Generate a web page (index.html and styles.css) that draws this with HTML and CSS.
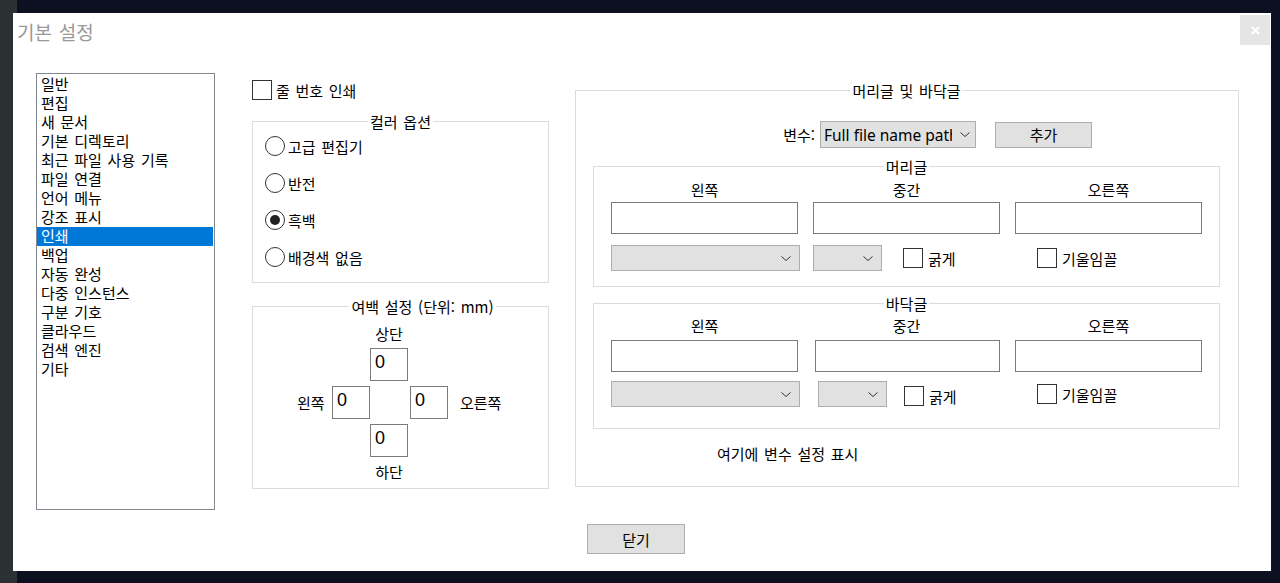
FILE: index.html
```html
<!DOCTYPE html>
<html lang="ko">
<head>
<meta charset="utf-8">
<title>기본 설정</title>
<link rel="stylesheet" href="styles.css">
</head>
<body>
<div class="dialog">
  <div class="titlebar">
    <div class="title">기본 설정</div>
    <div class="close-btn"><svg width="9" height="9" viewBox="0 0 9 9"><path d="M1 1L8 8M8 1L1 8" stroke="#ffffff" stroke-width="2"/></svg></div>
  </div>
  <div class="content">
    <ul class="listbox">
      <li>일반</li>
      <li>편집</li>
      <li>새 문서</li>
      <li>기본 디렉토리</li>
      <li>최근 파일 사용 기록</li>
      <li>파일 연결</li>
      <li>언어 메뉴</li>
      <li>강조 표시</li>
      <li class="selected">인쇄</li>
      <li>백업</li>
      <li>자동 완성</li>
      <li>다중 인스턴스</li>
      <li>구분 기호</li>
      <li>클라우드</li>
      <li>검색 엔진</li>
      <li>기타</li>
    </ul>
    <div class="center-col">
      <div class="check-row"><span class="checkbox"></span><span>줄 번호 인쇄</span></div>
      <fieldset class="group color-group">
        <legend>컬러 옵션</legend>
        <div class="radio-row"><span class="radio"></span><span>고급 편집기</span></div>
        <div class="radio-row"><span class="radio"></span><span>반전</span></div>
        <div class="radio-row"><span class="radio"><span class="dot"></span></span><span>흑백</span></div>
        <div class="radio-row"><span class="radio"></span><span>배경색 없음</span></div>
      </fieldset>
      <fieldset class="group margin-group">
        <legend>여백 설정 (단위: mm)</legend>
        <div class="margin-grid">
          <span class="m-label top-label">상단</span>
          <span class="num-box top-box">0</span>
          <span class="m-label left-label">왼쪽</span>
          <span class="num-box left-box">0</span>
          <span class="num-box right-box">0</span>
          <span class="m-label right-label">오른쪽</span>
          <span class="num-box bottom-box">0</span>
          <span class="m-label bottom-label">하단</span>
        </div>
      </fieldset>
    </div>
    <fieldset class="group hf-group">
      <legend>머리글 및 바닥글</legend>
      <div class="var-row">
        <span class="var-label">변수:</span>
        <div class="combo var-combo"><span class="combo-text">Full file name path</span><svg class="chev" width="10" height="5" viewBox="0 0 10 5"><polyline points="0.5,0.5 5,4.5 9.5,0.5" fill="none" stroke="#333" stroke-width="1"/></svg></div>
        <div class="button add-btn">추가</div>
      </div>
      <fieldset class="group sub-group header-group">
        <legend>머리글</legend>
        <div class="hf-row label-row"><span>왼쪽</span><span>중간</span><span>오른쪽</span></div>
        <div class="hf-row input-row"><span class="textbox"></span><span class="textbox"></span><span class="textbox"></span></div>
        <div class="hf-row combo-row">
          <div class="combo wide-combo"><svg class="chev" width="10" height="5" viewBox="0 0 10 5"><polyline points="0.5,0.5 5,4.5 9.5,0.5" fill="none" stroke="#333" stroke-width="1"/></svg></div>
          <div class="cell"><div class="combo small-combo"><svg class="chev" width="10" height="5" viewBox="0 0 10 5"><polyline points="0.5,0.5 5,4.5 9.5,0.5" fill="none" stroke="#333" stroke-width="1"/></svg></div><span class="check bold-check"><span class="checkbox"></span>굵게</span></div>
          <div class="cell"><span class="check italic-check"><span class="checkbox"></span>기울임꼴</span></div>
        </div>
      </fieldset>
      <fieldset class="group sub-group footer-group">
        <legend>바닥글</legend>
        <div class="hf-row label-row"><span>왼쪽</span><span>중간</span><span>오른쪽</span></div>
        <div class="hf-row input-row"><span class="textbox"></span><span class="textbox shifted"></span><span class="textbox"></span></div>
        <div class="hf-row combo-row">
          <div class="combo wide-combo"><svg class="chev" width="10" height="5" viewBox="0 0 10 5"><polyline points="0.5,0.5 5,4.5 9.5,0.5" fill="none" stroke="#333" stroke-width="1"/></svg></div>
          <div class="cell"><div class="combo small-combo shifted-combo"><svg class="chev" width="10" height="5" viewBox="0 0 10 5"><polyline points="0.5,0.5 5,4.5 9.5,0.5" fill="none" stroke="#333" stroke-width="1"/></svg></div><span class="check bold-check near"><span class="checkbox"></span>굵게</span></div>
          <div class="cell"><span class="check italic-check"><span class="checkbox"></span>기울임꼴</span></div>
        </div>
      </fieldset>
      <div class="var-display">여기에 변수 설정 표시</div>
    </fieldset>
  </div>
  <div class="footer"><div class="button close-button">닫기</div></div>
</div>
</body>
</html>
```

FILE: styles.css
```css
* { box-sizing: border-box; }
html, body { margin: 0; padding: 0; }
body {
  width: 1280px;
  height: 583px;
  overflow: hidden;
  background: linear-gradient(to right, #2b3033 0, #2b3033 17px, #0c1020 17px);
  font-family: "Noto Sans CJK KR", "Noto Sans", sans-serif;
  font-size: 15px;
  word-spacing: 1.5px;
  color: #000;
}
.dialog {
  margin: 13px 0 0 13px;
  width: 1258px;
  height: 558px;
  background: #fff;
  display: flex;
  flex-direction: column;
}
.titlebar {
  height: 60px;
  display: flex;
  justify-content: space-between;
  align-items: flex-start;
  flex: none;
}
.title {
  margin: 8px 0 0 4px;
  font-size: 19px;
  line-height: 22px;
  color: #999;
}
.close-btn {
  width: 30px;
  height: 30px;
  margin: 2px 1px 0 0;
  background: #e5e5e5;
  display: flex;
  align-items: center;
  justify-content: center;
}
.content {
  display: flex;
  align-items: flex-start;
  padding-left: 23px;
  height: 437px;
  flex: none;
}
.listbox {
  list-style: none;
  margin: 0;
  padding: 1px 1px 0 0;
  width: 179px;
  height: 437px;
  border: 1px solid #828790;
  flex: none;
}
.listbox li {
  height: 19px;
  line-height: 18px;
  padding-left: 4px;
  white-space: nowrap;
}
.listbox li.selected { background: #0078d7; color: #fff; }

.center-col {
  margin-left: 37px;
  width: 297px;
  display: flex;
  flex-direction: column;
  flex: none;
}
.check-row {
  display: flex;
  align-items: center;
  gap: 4px;
  margin-top: 7px;
  height: 20px;
}
.checkbox {
  width: 20px;
  height: 20px;
  border: 1px solid #333;
  background: #fff;
  flex: none;
  display: inline-block;
}
fieldset.group {
  margin: 0;
  padding: 0;
  border: 1px solid #dcdcdc;
  min-width: 0;
}
fieldset.group > legend {
  margin: 0 auto;
  padding: 0 2px;
  line-height: 17px;
}
.color-group {
  margin-top: 13px !important;
  padding: 6px 12px 15px !important;
}
.radio-row {
  display: flex;
  align-items: center;
  gap: 3px;
  height: 20px;
}
.radio-row + .radio-row { margin-top: 17px; }
.radio {
  width: 20px;
  height: 20px;
  border: 1px solid #333;
  border-radius: 50%;
  display: flex;
  align-items: center;
  justify-content: center;
  flex: none;
}
.dot {
  width: 10px;
  height: 10px;
  border-radius: 50%;
  background: #222;
}
.margin-group {
  margin-top: 15px !important;
  padding: 9px 0 7px 44px !important;
}
.margin-grid {
  display: grid;
  grid-template-columns: 35px 38px 40px 38px 54px;
  grid-template-rows: 19px 33px 33px 33px 19px;
  row-gap: 5px;
}
.m-label { line-height: 19px; white-space: nowrap; }
.top-label { grid-column: 3; grid-row: 1; text-align: center; padding-right: 2px; }
.left-label { grid-column: 1; grid-row: 3; align-self: center; }
.right-label { grid-column: 5; grid-row: 3; align-self: center; padding-left: 12px; }
.bottom-label { grid-column: 3; grid-row: 5; text-align: center; padding-right: 2px; }
.num-box {
  width: 38px;
  height: 33px;
  border: 1px solid #7a7a7a;
  font-family: "Liberation Sans", Arial, sans-serif;
  font-size: 18px;
  line-height: 20px;
  padding: 3px 0 0 4px;
}
.top-box { grid-column: 3; grid-row: 2; }
.left-box { grid-column: 2; grid-row: 3; }
.right-box { grid-column: 4; grid-row: 3; }
.bottom-box { grid-column: 3; grid-row: 4; }

.hf-group {
  margin-left: 26px !important;
  margin-top: 9px !important;
  width: 664px;
  padding: 22px 18px 23px 17px !important;
  flex: none;
}
.var-row {
  display: flex;
  align-items: center;
  height: 27px;
}
.var-label {
  width: 40px;
  margin-left: 182px;
  text-align: right;
}
.combo {
  background: #e1e1e1;
  border: 1px solid #adadad;
  display: flex;
  align-items: center;
  justify-content: flex-end;
  padding-right: 8px;
  flex: none;
}
.var-combo {
  width: 156px;
  height: 27px;
  margin-left: 5px;
  justify-content: space-between;
  padding: 0 5px 0 3px;
}
.combo-text {
  font-family: "Noto Sans", "Open Sans", sans-serif;
  font-size: 15.5px;
  word-spacing: 0;
  line-height: 20px;
  width: 128px;
  overflow: hidden;
  white-space: nowrap;
}
.button {
  background: #e1e1e1;
  border: 1px solid #adadad;
  display: flex;
  align-items: center;
  justify-content: center;
  flex: none;
}
.add-btn {
  width: 97px;
  height: 26px;
  margin-left: 19px;
}
.sub-group { padding: 6px 17px 15px !important; }
.header-group { margin-top: 10px !important; }
.footer-group { margin-top: 8px !important; padding: 5px 17px 21px !important; }
.hf-row {
  display: grid;
  grid-template-columns: 187px 187px 187px;
  column-gap: 15px;
}
.label-row { height: 18px; line-height: 18px; text-align: center; }
.input-row { margin-top: 3px; }
.footer-group .input-row { margin-top: 5px; }
.textbox {
  height: 32px;
  border: 1px solid #7a7a7a;
  background: #fff;
}
.textbox.shifted { margin-left: 2px; width: 185px; }
.combo-row { margin-top: 11px; height: 26px; align-items: center; }
.footer-group .combo-row { margin-top: 9px; }
.wide-combo { width: 189px; height: 26px; }
.small-combo { width: 69px; height: 26px; }
.shifted-combo { margin-left: 5px; }
.cell { display: flex; align-items: center; }
.check {
  display: flex;
  align-items: center;
  gap: 5px;
  white-space: nowrap;
}
.bold-check { margin-left: 21px; }
.bold-check.near { margin-left: 17px; margin-top: 4px; }
.italic-check { margin-left: 22px; }
.var-display {
  margin-top: 16px;
  line-height: 18px;
  padding-left: 124px;
}
.footer {
  margin-top: 14px;
  padding-left: 574px;
}
.close-button { width: 98px; height: 30px; }
```
